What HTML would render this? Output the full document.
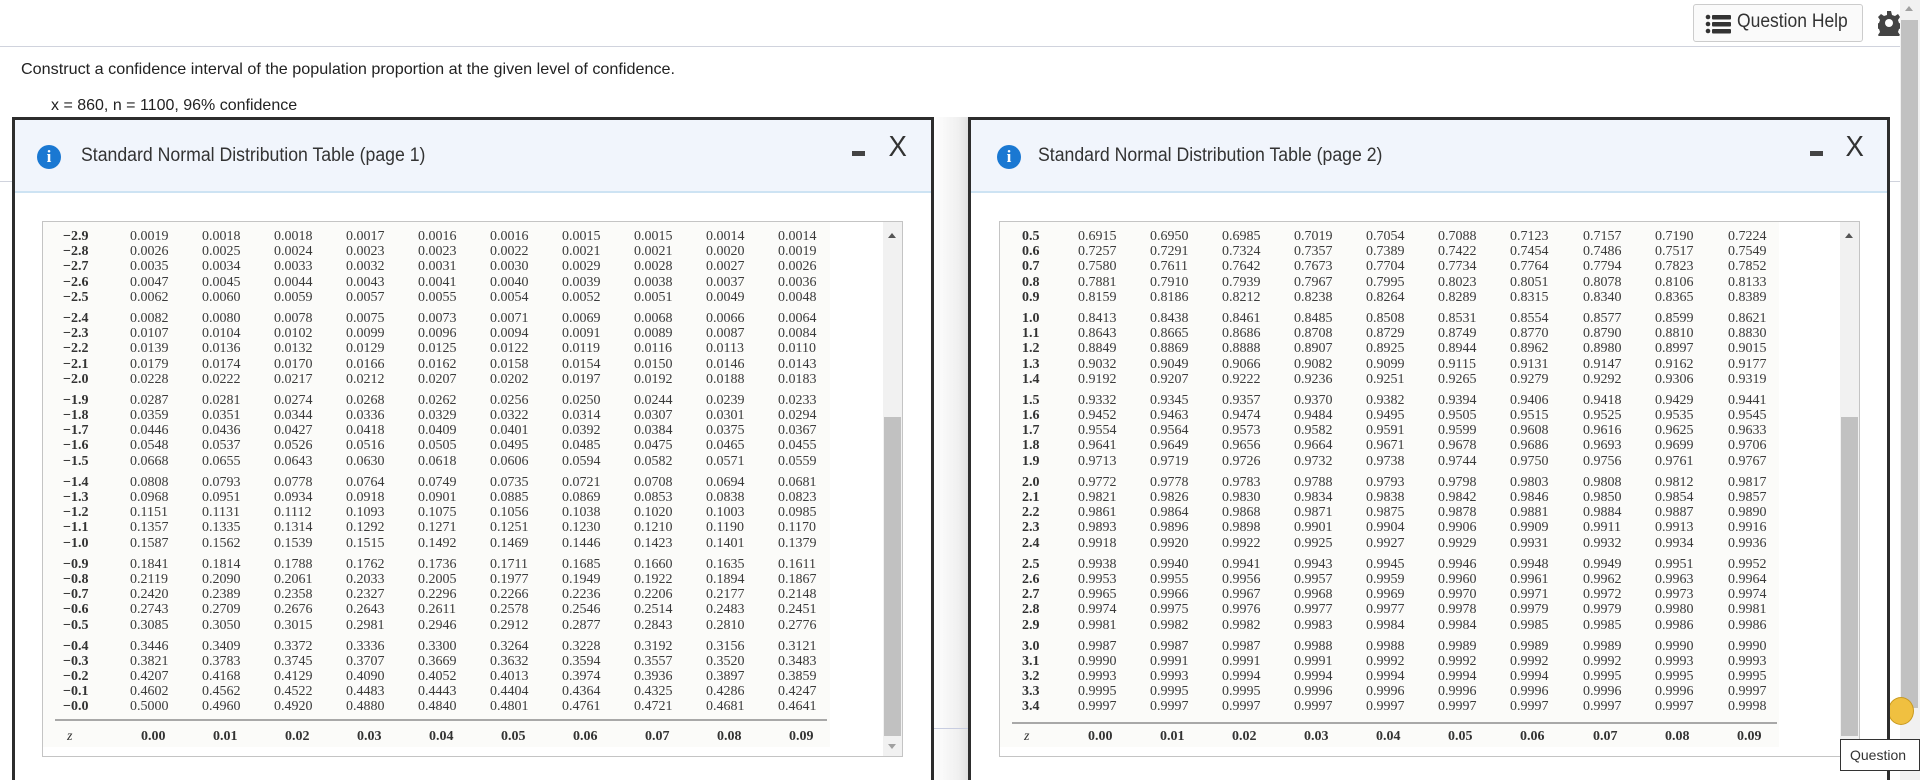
<!DOCTYPE html>
<html><head><meta charset="utf-8"><style>
*{margin:0;padding:0;box-sizing:border-box}
html,body{width:1920px;height:780px;overflow:hidden}
body{background:#fff;font-family:"Liberation Sans",sans-serif;color:#333;position:relative}
.abs{position:absolute}
.dlg{position:absolute;top:117px;width:922px;height:670px;border:3px solid #2d2d2d;border-bottom:none;background:#fff;overflow:hidden}
.hdr{position:absolute;left:0;top:0;right:0;height:73px;background:#f1f5fc;border-bottom:2px solid #cde3f3}
.ic{position:absolute;top:25px;width:24px;height:24px;border-radius:50%;background:#1a78d2;color:#fff;font:bold 17px "Liberation Serif",serif;text-align:center;line-height:24px}
.tt{position:absolute;top:25px;font-size:19px;color:#333;transform:scaleX(.93);transform-origin:left}
.dash{position:absolute;top:31px;width:13px;height:5px;background:#444}
.x{position:absolute;top:11px;font-size:29px;color:#333;font-weight:normal;transform:scaleX(.95)}
.box{position:absolute;top:101px;width:861px;height:536px;border:1px solid #c4c4c4;background:#fff}
.cont{position:absolute;left:0;top:0;height:525px;background:#fbfbf9;font:14px "Liberation Serif",serif;color:#3a3a3a;padding-top:7px}
.r{height:15.2px;line-height:15.2px;position:relative;white-space:nowrap}
.g{margin-top:6px}
.r b,.r i{position:absolute;top:0}
.r b{font-weight:bold;color:#333}
.r i{font-style:normal}
.sb{position:absolute;right:0;top:0;width:19px;height:534px;background:#f1f1f1}
.th{position:absolute;left:1px;width:17px;background:#c1c1c1}
.rule{position:absolute;height:2px;background:#a8a8a8}
.lab{position:absolute;font:bold 14px "Liberation Serif",serif;color:#333}
</style></head><body>

<div class="abs" style="left:0;top:46px;width:1900px;height:1px;background:#d0d3dd"></div>
<div class="abs" style="left:0;top:181px;width:1900px;height:1px;background:#d0d3dd"></div>
<div class="abs" style="left:21px;top:61px;font-size:16px;color:#222;white-space:nowrap;transform:scaleX(1.01);transform-origin:left">Construct a confidence interval of the population proportion at the given level of confidence.</div>
<div class="abs" style="left:51px;top:97px;font-size:16px;color:#222;white-space:nowrap">x = 860, n = 1100, 96% confidence</div>

<div class="abs" style="left:1693px;top:4px;width:170px;height:38px;border:1px solid #ccc;border-radius:3px;background:#fafafa"></div>
<svg class="abs" style="left:1705px;top:14px" width="27" height="20" viewBox="0 0 27 20"><g fill="#333"><circle cx="3" cy="3" r="2.3"/><circle cx="3" cy="10" r="2.3"/><circle cx="3" cy="17" r="2.3"/><rect x="7" y="1" width="19" height="4.5" rx="1"/><rect x="7" y="8" width="19" height="4.5" rx="1"/><rect x="7" y="15" width="19" height="4.5" rx="1"/></g></svg>
<div class="abs" style="left:1737px;top:11px;font-size:19px;color:#333;transform:scaleX(.92);transform-origin:left;white-space:nowrap">Question Help</div>
<svg class="abs" style="left:1878px;top:10px" width="22" height="26" viewBox="0 0 22 26"><path fill="#444" d="M9 1h4l1 4 3 1 3-2 2 3-2 3 1 3 3 1v4l-3 1-1 3 2 3-3 3-3-2-3 1-1 4H9l-1-4-3-1-3 2-2-3 2-3-1-3-3-1v-4l3-1 1-3-2-3 3-3 3 2 3-1z"/><circle cx="11" cy="13" r="4" fill="#fff"/></svg>
<div class="abs" style="left:1900px;top:0;width:20px;height:780px;background:#f1f1f1"></div>
<div class="abs" style="left:1901px;top:20px;width:17px;height:688px;background:#c1c1c1"></div>
<div class="abs" style="left:1905px;top:6px;width:0;height:0;border-left:4px solid transparent;border-right:4px solid transparent;border-bottom:5px solid #a0a0a0"></div>
<div class="abs" style="left:1888px;top:697px;width:26px;height:28px;border-radius:50%;background:#f0c040;border:1px solid #c99a20"></div>

<div class="abs" style="left:933px;top:117px;width:36px;height:663px;background:linear-gradient(90deg,#fff,#f0f0f0 70%,#dedede)"></div>
<div class="abs" style="left:933px;top:728px;width:36px;height:1px;background:#c8cde0"></div>

<!-- Dialog 1 -->
<div class="dlg" style="left:12px">
 <div class="hdr">
  <div class="ic" style="left:22px">i</div>
  <div class="tt" style="left:66px">Standard Normal Distribution Table (page 1)</div>
  <div class="dash" style="left:837px"></div>
  <div class="x" style="left:873px">X</div>
 </div>
 <div class="box" style="left:27px">
  <div class="cont" style="width:787px">
<div class="r"><b style="left:20px">−2.9</b><i style="left:87px">0.0019</i><i style="left:159px">0.0018</i><i style="left:231px">0.0018</i><i style="left:303px">0.0017</i><i style="left:375px">0.0016</i><i style="left:447px">0.0016</i><i style="left:519px">0.0015</i><i style="left:591px">0.0015</i><i style="left:663px">0.0014</i><i style="left:735px">0.0014</i></div>
<div class="r"><b style="left:20px">−2.8</b><i style="left:87px">0.0026</i><i style="left:159px">0.0025</i><i style="left:231px">0.0024</i><i style="left:303px">0.0023</i><i style="left:375px">0.0023</i><i style="left:447px">0.0022</i><i style="left:519px">0.0021</i><i style="left:591px">0.0021</i><i style="left:663px">0.0020</i><i style="left:735px">0.0019</i></div>
<div class="r"><b style="left:20px">−2.7</b><i style="left:87px">0.0035</i><i style="left:159px">0.0034</i><i style="left:231px">0.0033</i><i style="left:303px">0.0032</i><i style="left:375px">0.0031</i><i style="left:447px">0.0030</i><i style="left:519px">0.0029</i><i style="left:591px">0.0028</i><i style="left:663px">0.0027</i><i style="left:735px">0.0026</i></div>
<div class="r"><b style="left:20px">−2.6</b><i style="left:87px">0.0047</i><i style="left:159px">0.0045</i><i style="left:231px">0.0044</i><i style="left:303px">0.0043</i><i style="left:375px">0.0041</i><i style="left:447px">0.0040</i><i style="left:519px">0.0039</i><i style="left:591px">0.0038</i><i style="left:663px">0.0037</i><i style="left:735px">0.0036</i></div>
<div class="r"><b style="left:20px">−2.5</b><i style="left:87px">0.0062</i><i style="left:159px">0.0060</i><i style="left:231px">0.0059</i><i style="left:303px">0.0057</i><i style="left:375px">0.0055</i><i style="left:447px">0.0054</i><i style="left:519px">0.0052</i><i style="left:591px">0.0051</i><i style="left:663px">0.0049</i><i style="left:735px">0.0048</i></div>
<div class="r g"><b style="left:20px">−2.4</b><i style="left:87px">0.0082</i><i style="left:159px">0.0080</i><i style="left:231px">0.0078</i><i style="left:303px">0.0075</i><i style="left:375px">0.0073</i><i style="left:447px">0.0071</i><i style="left:519px">0.0069</i><i style="left:591px">0.0068</i><i style="left:663px">0.0066</i><i style="left:735px">0.0064</i></div>
<div class="r"><b style="left:20px">−2.3</b><i style="left:87px">0.0107</i><i style="left:159px">0.0104</i><i style="left:231px">0.0102</i><i style="left:303px">0.0099</i><i style="left:375px">0.0096</i><i style="left:447px">0.0094</i><i style="left:519px">0.0091</i><i style="left:591px">0.0089</i><i style="left:663px">0.0087</i><i style="left:735px">0.0084</i></div>
<div class="r"><b style="left:20px">−2.2</b><i style="left:87px">0.0139</i><i style="left:159px">0.0136</i><i style="left:231px">0.0132</i><i style="left:303px">0.0129</i><i style="left:375px">0.0125</i><i style="left:447px">0.0122</i><i style="left:519px">0.0119</i><i style="left:591px">0.0116</i><i style="left:663px">0.0113</i><i style="left:735px">0.0110</i></div>
<div class="r"><b style="left:20px">−2.1</b><i style="left:87px">0.0179</i><i style="left:159px">0.0174</i><i style="left:231px">0.0170</i><i style="left:303px">0.0166</i><i style="left:375px">0.0162</i><i style="left:447px">0.0158</i><i style="left:519px">0.0154</i><i style="left:591px">0.0150</i><i style="left:663px">0.0146</i><i style="left:735px">0.0143</i></div>
<div class="r"><b style="left:20px">−2.0</b><i style="left:87px">0.0228</i><i style="left:159px">0.0222</i><i style="left:231px">0.0217</i><i style="left:303px">0.0212</i><i style="left:375px">0.0207</i><i style="left:447px">0.0202</i><i style="left:519px">0.0197</i><i style="left:591px">0.0192</i><i style="left:663px">0.0188</i><i style="left:735px">0.0183</i></div>
<div class="r g"><b style="left:20px">−1.9</b><i style="left:87px">0.0287</i><i style="left:159px">0.0281</i><i style="left:231px">0.0274</i><i style="left:303px">0.0268</i><i style="left:375px">0.0262</i><i style="left:447px">0.0256</i><i style="left:519px">0.0250</i><i style="left:591px">0.0244</i><i style="left:663px">0.0239</i><i style="left:735px">0.0233</i></div>
<div class="r"><b style="left:20px">−1.8</b><i style="left:87px">0.0359</i><i style="left:159px">0.0351</i><i style="left:231px">0.0344</i><i style="left:303px">0.0336</i><i style="left:375px">0.0329</i><i style="left:447px">0.0322</i><i style="left:519px">0.0314</i><i style="left:591px">0.0307</i><i style="left:663px">0.0301</i><i style="left:735px">0.0294</i></div>
<div class="r"><b style="left:20px">−1.7</b><i style="left:87px">0.0446</i><i style="left:159px">0.0436</i><i style="left:231px">0.0427</i><i style="left:303px">0.0418</i><i style="left:375px">0.0409</i><i style="left:447px">0.0401</i><i style="left:519px">0.0392</i><i style="left:591px">0.0384</i><i style="left:663px">0.0375</i><i style="left:735px">0.0367</i></div>
<div class="r"><b style="left:20px">−1.6</b><i style="left:87px">0.0548</i><i style="left:159px">0.0537</i><i style="left:231px">0.0526</i><i style="left:303px">0.0516</i><i style="left:375px">0.0505</i><i style="left:447px">0.0495</i><i style="left:519px">0.0485</i><i style="left:591px">0.0475</i><i style="left:663px">0.0465</i><i style="left:735px">0.0455</i></div>
<div class="r"><b style="left:20px">−1.5</b><i style="left:87px">0.0668</i><i style="left:159px">0.0655</i><i style="left:231px">0.0643</i><i style="left:303px">0.0630</i><i style="left:375px">0.0618</i><i style="left:447px">0.0606</i><i style="left:519px">0.0594</i><i style="left:591px">0.0582</i><i style="left:663px">0.0571</i><i style="left:735px">0.0559</i></div>
<div class="r g"><b style="left:20px">−1.4</b><i style="left:87px">0.0808</i><i style="left:159px">0.0793</i><i style="left:231px">0.0778</i><i style="left:303px">0.0764</i><i style="left:375px">0.0749</i><i style="left:447px">0.0735</i><i style="left:519px">0.0721</i><i style="left:591px">0.0708</i><i style="left:663px">0.0694</i><i style="left:735px">0.0681</i></div>
<div class="r"><b style="left:20px">−1.3</b><i style="left:87px">0.0968</i><i style="left:159px">0.0951</i><i style="left:231px">0.0934</i><i style="left:303px">0.0918</i><i style="left:375px">0.0901</i><i style="left:447px">0.0885</i><i style="left:519px">0.0869</i><i style="left:591px">0.0853</i><i style="left:663px">0.0838</i><i style="left:735px">0.0823</i></div>
<div class="r"><b style="left:20px">−1.2</b><i style="left:87px">0.1151</i><i style="left:159px">0.1131</i><i style="left:231px">0.1112</i><i style="left:303px">0.1093</i><i style="left:375px">0.1075</i><i style="left:447px">0.1056</i><i style="left:519px">0.1038</i><i style="left:591px">0.1020</i><i style="left:663px">0.1003</i><i style="left:735px">0.0985</i></div>
<div class="r"><b style="left:20px">−1.1</b><i style="left:87px">0.1357</i><i style="left:159px">0.1335</i><i style="left:231px">0.1314</i><i style="left:303px">0.1292</i><i style="left:375px">0.1271</i><i style="left:447px">0.1251</i><i style="left:519px">0.1230</i><i style="left:591px">0.1210</i><i style="left:663px">0.1190</i><i style="left:735px">0.1170</i></div>
<div class="r"><b style="left:20px">−1.0</b><i style="left:87px">0.1587</i><i style="left:159px">0.1562</i><i style="left:231px">0.1539</i><i style="left:303px">0.1515</i><i style="left:375px">0.1492</i><i style="left:447px">0.1469</i><i style="left:519px">0.1446</i><i style="left:591px">0.1423</i><i style="left:663px">0.1401</i><i style="left:735px">0.1379</i></div>
<div class="r g"><b style="left:20px">−0.9</b><i style="left:87px">0.1841</i><i style="left:159px">0.1814</i><i style="left:231px">0.1788</i><i style="left:303px">0.1762</i><i style="left:375px">0.1736</i><i style="left:447px">0.1711</i><i style="left:519px">0.1685</i><i style="left:591px">0.1660</i><i style="left:663px">0.1635</i><i style="left:735px">0.1611</i></div>
<div class="r"><b style="left:20px">−0.8</b><i style="left:87px">0.2119</i><i style="left:159px">0.2090</i><i style="left:231px">0.2061</i><i style="left:303px">0.2033</i><i style="left:375px">0.2005</i><i style="left:447px">0.1977</i><i style="left:519px">0.1949</i><i style="left:591px">0.1922</i><i style="left:663px">0.1894</i><i style="left:735px">0.1867</i></div>
<div class="r"><b style="left:20px">−0.7</b><i style="left:87px">0.2420</i><i style="left:159px">0.2389</i><i style="left:231px">0.2358</i><i style="left:303px">0.2327</i><i style="left:375px">0.2296</i><i style="left:447px">0.2266</i><i style="left:519px">0.2236</i><i style="left:591px">0.2206</i><i style="left:663px">0.2177</i><i style="left:735px">0.2148</i></div>
<div class="r"><b style="left:20px">−0.6</b><i style="left:87px">0.2743</i><i style="left:159px">0.2709</i><i style="left:231px">0.2676</i><i style="left:303px">0.2643</i><i style="left:375px">0.2611</i><i style="left:447px">0.2578</i><i style="left:519px">0.2546</i><i style="left:591px">0.2514</i><i style="left:663px">0.2483</i><i style="left:735px">0.2451</i></div>
<div class="r"><b style="left:20px">−0.5</b><i style="left:87px">0.3085</i><i style="left:159px">0.3050</i><i style="left:231px">0.3015</i><i style="left:303px">0.2981</i><i style="left:375px">0.2946</i><i style="left:447px">0.2912</i><i style="left:519px">0.2877</i><i style="left:591px">0.2843</i><i style="left:663px">0.2810</i><i style="left:735px">0.2776</i></div>
<div class="r g"><b style="left:20px">−0.4</b><i style="left:87px">0.3446</i><i style="left:159px">0.3409</i><i style="left:231px">0.3372</i><i style="left:303px">0.3336</i><i style="left:375px">0.3300</i><i style="left:447px">0.3264</i><i style="left:519px">0.3228</i><i style="left:591px">0.3192</i><i style="left:663px">0.3156</i><i style="left:735px">0.3121</i></div>
<div class="r"><b style="left:20px">−0.3</b><i style="left:87px">0.3821</i><i style="left:159px">0.3783</i><i style="left:231px">0.3745</i><i style="left:303px">0.3707</i><i style="left:375px">0.3669</i><i style="left:447px">0.3632</i><i style="left:519px">0.3594</i><i style="left:591px">0.3557</i><i style="left:663px">0.3520</i><i style="left:735px">0.3483</i></div>
<div class="r"><b style="left:20px">−0.2</b><i style="left:87px">0.4207</i><i style="left:159px">0.4168</i><i style="left:231px">0.4129</i><i style="left:303px">0.4090</i><i style="left:375px">0.4052</i><i style="left:447px">0.4013</i><i style="left:519px">0.3974</i><i style="left:591px">0.3936</i><i style="left:663px">0.3897</i><i style="left:735px">0.3859</i></div>
<div class="r"><b style="left:20px">−0.1</b><i style="left:87px">0.4602</i><i style="left:159px">0.4562</i><i style="left:231px">0.4522</i><i style="left:303px">0.4483</i><i style="left:375px">0.4443</i><i style="left:447px">0.4404</i><i style="left:519px">0.4364</i><i style="left:591px">0.4325</i><i style="left:663px">0.4286</i><i style="left:735px">0.4247</i></div>
<div class="r"><b style="left:20px">−0.0</b><i style="left:87px">0.5000</i><i style="left:159px">0.4960</i><i style="left:231px">0.4920</i><i style="left:303px">0.4880</i><i style="left:375px">0.4840</i><i style="left:447px">0.4801</i><i style="left:519px">0.4761</i><i style="left:591px">0.4721</i><i style="left:663px">0.4681</i><i style="left:735px">0.4641</i></div>
   <div class="rule" style="left:12px;top:497px;width:772px"></div>
   <div class="lab" style="left:24px;top:507px;font-style:italic;font-weight:normal">z</div>
   <div class="lab" style="left:98px;top:507px">0.00</div><div class="lab" style="left:170px;top:507px">0.01</div><div class="lab" style="left:242px;top:507px">0.02</div><div class="lab" style="left:314px;top:507px">0.03</div><div class="lab" style="left:386px;top:507px">0.04</div><div class="lab" style="left:458px;top:507px">0.05</div><div class="lab" style="left:530px;top:507px">0.06</div><div class="lab" style="left:602px;top:507px">0.07</div><div class="lab" style="left:674px;top:507px">0.08</div><div class="lab" style="left:746px;top:507px">0.09</div>
  </div>
  <div class="sb"><div class="th" style="top:195px;height:319px"></div>
   <div class="abs" style="left:5px;top:11px;border-left:4px solid transparent;border-right:4px solid transparent;border-bottom:5px solid #555"></div>
   <div class="abs" style="left:5px;top:522px;border-left:4px solid transparent;border-right:4px solid transparent;border-top:5px solid #a0a0a0"></div></div>
 </div>
</div>

<!-- Dialog 2 -->
<div class="dlg" style="left:968px">
 <div class="hdr">
  <div class="ic" style="left:26px">i</div>
  <div class="tt" style="left:67px">Standard Normal Distribution Table (page 2)</div>
  <div class="dash" style="left:839px"></div>
  <div class="x" style="left:874px">X</div>
 </div>
 <div class="box" style="left:28px">
  <div class="cont" style="width:779px">
<div class="r"><b style="left:22px">0.5</b><i style="left:78px">0.6915</i><i style="left:150px">0.6950</i><i style="left:222px">0.6985</i><i style="left:294px">0.7019</i><i style="left:366px">0.7054</i><i style="left:438px">0.7088</i><i style="left:510px">0.7123</i><i style="left:583px">0.7157</i><i style="left:655px">0.7190</i><i style="left:728px">0.7224</i></div>
<div class="r"><b style="left:22px">0.6</b><i style="left:78px">0.7257</i><i style="left:150px">0.7291</i><i style="left:222px">0.7324</i><i style="left:294px">0.7357</i><i style="left:366px">0.7389</i><i style="left:438px">0.7422</i><i style="left:510px">0.7454</i><i style="left:583px">0.7486</i><i style="left:655px">0.7517</i><i style="left:728px">0.7549</i></div>
<div class="r"><b style="left:22px">0.7</b><i style="left:78px">0.7580</i><i style="left:150px">0.7611</i><i style="left:222px">0.7642</i><i style="left:294px">0.7673</i><i style="left:366px">0.7704</i><i style="left:438px">0.7734</i><i style="left:510px">0.7764</i><i style="left:583px">0.7794</i><i style="left:655px">0.7823</i><i style="left:728px">0.7852</i></div>
<div class="r"><b style="left:22px">0.8</b><i style="left:78px">0.7881</i><i style="left:150px">0.7910</i><i style="left:222px">0.7939</i><i style="left:294px">0.7967</i><i style="left:366px">0.7995</i><i style="left:438px">0.8023</i><i style="left:510px">0.8051</i><i style="left:583px">0.8078</i><i style="left:655px">0.8106</i><i style="left:728px">0.8133</i></div>
<div class="r"><b style="left:22px">0.9</b><i style="left:78px">0.8159</i><i style="left:150px">0.8186</i><i style="left:222px">0.8212</i><i style="left:294px">0.8238</i><i style="left:366px">0.8264</i><i style="left:438px">0.8289</i><i style="left:510px">0.8315</i><i style="left:583px">0.8340</i><i style="left:655px">0.8365</i><i style="left:728px">0.8389</i></div>
<div class="r g"><b style="left:22px">1.0</b><i style="left:78px">0.8413</i><i style="left:150px">0.8438</i><i style="left:222px">0.8461</i><i style="left:294px">0.8485</i><i style="left:366px">0.8508</i><i style="left:438px">0.8531</i><i style="left:510px">0.8554</i><i style="left:583px">0.8577</i><i style="left:655px">0.8599</i><i style="left:728px">0.8621</i></div>
<div class="r"><b style="left:22px">1.1</b><i style="left:78px">0.8643</i><i style="left:150px">0.8665</i><i style="left:222px">0.8686</i><i style="left:294px">0.8708</i><i style="left:366px">0.8729</i><i style="left:438px">0.8749</i><i style="left:510px">0.8770</i><i style="left:583px">0.8790</i><i style="left:655px">0.8810</i><i style="left:728px">0.8830</i></div>
<div class="r"><b style="left:22px">1.2</b><i style="left:78px">0.8849</i><i style="left:150px">0.8869</i><i style="left:222px">0.8888</i><i style="left:294px">0.8907</i><i style="left:366px">0.8925</i><i style="left:438px">0.8944</i><i style="left:510px">0.8962</i><i style="left:583px">0.8980</i><i style="left:655px">0.8997</i><i style="left:728px">0.9015</i></div>
<div class="r"><b style="left:22px">1.3</b><i style="left:78px">0.9032</i><i style="left:150px">0.9049</i><i style="left:222px">0.9066</i><i style="left:294px">0.9082</i><i style="left:366px">0.9099</i><i style="left:438px">0.9115</i><i style="left:510px">0.9131</i><i style="left:583px">0.9147</i><i style="left:655px">0.9162</i><i style="left:728px">0.9177</i></div>
<div class="r"><b style="left:22px">1.4</b><i style="left:78px">0.9192</i><i style="left:150px">0.9207</i><i style="left:222px">0.9222</i><i style="left:294px">0.9236</i><i style="left:366px">0.9251</i><i style="left:438px">0.9265</i><i style="left:510px">0.9279</i><i style="left:583px">0.9292</i><i style="left:655px">0.9306</i><i style="left:728px">0.9319</i></div>
<div class="r g"><b style="left:22px">1.5</b><i style="left:78px">0.9332</i><i style="left:150px">0.9345</i><i style="left:222px">0.9357</i><i style="left:294px">0.9370</i><i style="left:366px">0.9382</i><i style="left:438px">0.9394</i><i style="left:510px">0.9406</i><i style="left:583px">0.9418</i><i style="left:655px">0.9429</i><i style="left:728px">0.9441</i></div>
<div class="r"><b style="left:22px">1.6</b><i style="left:78px">0.9452</i><i style="left:150px">0.9463</i><i style="left:222px">0.9474</i><i style="left:294px">0.9484</i><i style="left:366px">0.9495</i><i style="left:438px">0.9505</i><i style="left:510px">0.9515</i><i style="left:583px">0.9525</i><i style="left:655px">0.9535</i><i style="left:728px">0.9545</i></div>
<div class="r"><b style="left:22px">1.7</b><i style="left:78px">0.9554</i><i style="left:150px">0.9564</i><i style="left:222px">0.9573</i><i style="left:294px">0.9582</i><i style="left:366px">0.9591</i><i style="left:438px">0.9599</i><i style="left:510px">0.9608</i><i style="left:583px">0.9616</i><i style="left:655px">0.9625</i><i style="left:728px">0.9633</i></div>
<div class="r"><b style="left:22px">1.8</b><i style="left:78px">0.9641</i><i style="left:150px">0.9649</i><i style="left:222px">0.9656</i><i style="left:294px">0.9664</i><i style="left:366px">0.9671</i><i style="left:438px">0.9678</i><i style="left:510px">0.9686</i><i style="left:583px">0.9693</i><i style="left:655px">0.9699</i><i style="left:728px">0.9706</i></div>
<div class="r"><b style="left:22px">1.9</b><i style="left:78px">0.9713</i><i style="left:150px">0.9719</i><i style="left:222px">0.9726</i><i style="left:294px">0.9732</i><i style="left:366px">0.9738</i><i style="left:438px">0.9744</i><i style="left:510px">0.9750</i><i style="left:583px">0.9756</i><i style="left:655px">0.9761</i><i style="left:728px">0.9767</i></div>
<div class="r g"><b style="left:22px">2.0</b><i style="left:78px">0.9772</i><i style="left:150px">0.9778</i><i style="left:222px">0.9783</i><i style="left:294px">0.9788</i><i style="left:366px">0.9793</i><i style="left:438px">0.9798</i><i style="left:510px">0.9803</i><i style="left:583px">0.9808</i><i style="left:655px">0.9812</i><i style="left:728px">0.9817</i></div>
<div class="r"><b style="left:22px">2.1</b><i style="left:78px">0.9821</i><i style="left:150px">0.9826</i><i style="left:222px">0.9830</i><i style="left:294px">0.9834</i><i style="left:366px">0.9838</i><i style="left:438px">0.9842</i><i style="left:510px">0.9846</i><i style="left:583px">0.9850</i><i style="left:655px">0.9854</i><i style="left:728px">0.9857</i></div>
<div class="r"><b style="left:22px">2.2</b><i style="left:78px">0.9861</i><i style="left:150px">0.9864</i><i style="left:222px">0.9868</i><i style="left:294px">0.9871</i><i style="left:366px">0.9875</i><i style="left:438px">0.9878</i><i style="left:510px">0.9881</i><i style="left:583px">0.9884</i><i style="left:655px">0.9887</i><i style="left:728px">0.9890</i></div>
<div class="r"><b style="left:22px">2.3</b><i style="left:78px">0.9893</i><i style="left:150px">0.9896</i><i style="left:222px">0.9898</i><i style="left:294px">0.9901</i><i style="left:366px">0.9904</i><i style="left:438px">0.9906</i><i style="left:510px">0.9909</i><i style="left:583px">0.9911</i><i style="left:655px">0.9913</i><i style="left:728px">0.9916</i></div>
<div class="r"><b style="left:22px">2.4</b><i style="left:78px">0.9918</i><i style="left:150px">0.9920</i><i style="left:222px">0.9922</i><i style="left:294px">0.9925</i><i style="left:366px">0.9927</i><i style="left:438px">0.9929</i><i style="left:510px">0.9931</i><i style="left:583px">0.9932</i><i style="left:655px">0.9934</i><i style="left:728px">0.9936</i></div>
<div class="r g"><b style="left:22px">2.5</b><i style="left:78px">0.9938</i><i style="left:150px">0.9940</i><i style="left:222px">0.9941</i><i style="left:294px">0.9943</i><i style="left:366px">0.9945</i><i style="left:438px">0.9946</i><i style="left:510px">0.9948</i><i style="left:583px">0.9949</i><i style="left:655px">0.9951</i><i style="left:728px">0.9952</i></div>
<div class="r"><b style="left:22px">2.6</b><i style="left:78px">0.9953</i><i style="left:150px">0.9955</i><i style="left:222px">0.9956</i><i style="left:294px">0.9957</i><i style="left:366px">0.9959</i><i style="left:438px">0.9960</i><i style="left:510px">0.9961</i><i style="left:583px">0.9962</i><i style="left:655px">0.9963</i><i style="left:728px">0.9964</i></div>
<div class="r"><b style="left:22px">2.7</b><i style="left:78px">0.9965</i><i style="left:150px">0.9966</i><i style="left:222px">0.9967</i><i style="left:294px">0.9968</i><i style="left:366px">0.9969</i><i style="left:438px">0.9970</i><i style="left:510px">0.9971</i><i style="left:583px">0.9972</i><i style="left:655px">0.9973</i><i style="left:728px">0.9974</i></div>
<div class="r"><b style="left:22px">2.8</b><i style="left:78px">0.9974</i><i style="left:150px">0.9975</i><i style="left:222px">0.9976</i><i style="left:294px">0.9977</i><i style="left:366px">0.9977</i><i style="left:438px">0.9978</i><i style="left:510px">0.9979</i><i style="left:583px">0.9979</i><i style="left:655px">0.9980</i><i style="left:728px">0.9981</i></div>
<div class="r"><b style="left:22px">2.9</b><i style="left:78px">0.9981</i><i style="left:150px">0.9982</i><i style="left:222px">0.9982</i><i style="left:294px">0.9983</i><i style="left:366px">0.9984</i><i style="left:438px">0.9984</i><i style="left:510px">0.9985</i><i style="left:583px">0.9985</i><i style="left:655px">0.9986</i><i style="left:728px">0.9986</i></div>
<div class="r g"><b style="left:22px">3.0</b><i style="left:78px">0.9987</i><i style="left:150px">0.9987</i><i style="left:222px">0.9987</i><i style="left:294px">0.9988</i><i style="left:366px">0.9988</i><i style="left:438px">0.9989</i><i style="left:510px">0.9989</i><i style="left:583px">0.9989</i><i style="left:655px">0.9990</i><i style="left:728px">0.9990</i></div>
<div class="r"><b style="left:22px">3.1</b><i style="left:78px">0.9990</i><i style="left:150px">0.9991</i><i style="left:222px">0.9991</i><i style="left:294px">0.9991</i><i style="left:366px">0.9992</i><i style="left:438px">0.9992</i><i style="left:510px">0.9992</i><i style="left:583px">0.9992</i><i style="left:655px">0.9993</i><i style="left:728px">0.9993</i></div>
<div class="r"><b style="left:22px">3.2</b><i style="left:78px">0.9993</i><i style="left:150px">0.9993</i><i style="left:222px">0.9994</i><i style="left:294px">0.9994</i><i style="left:366px">0.9994</i><i style="left:438px">0.9994</i><i style="left:510px">0.9994</i><i style="left:583px">0.9995</i><i style="left:655px">0.9995</i><i style="left:728px">0.9995</i></div>
<div class="r"><b style="left:22px">3.3</b><i style="left:78px">0.9995</i><i style="left:150px">0.9995</i><i style="left:222px">0.9995</i><i style="left:294px">0.9996</i><i style="left:366px">0.9996</i><i style="left:438px">0.9996</i><i style="left:510px">0.9996</i><i style="left:583px">0.9996</i><i style="left:655px">0.9996</i><i style="left:728px">0.9997</i></div>
<div class="r"><b style="left:22px">3.4</b><i style="left:78px">0.9997</i><i style="left:150px">0.9997</i><i style="left:222px">0.9997</i><i style="left:294px">0.9997</i><i style="left:366px">0.9997</i><i style="left:438px">0.9997</i><i style="left:510px">0.9997</i><i style="left:583px">0.9997</i><i style="left:655px">0.9997</i><i style="left:728px">0.9998</i></div>
   <div class="rule" style="left:12px;top:500px;width:765px"></div>
   <div class="lab" style="left:24px;top:507px;font-style:italic;font-weight:normal">z</div>
   <div class="lab" style="left:88px;top:507px">0.00</div><div class="lab" style="left:160px;top:507px">0.01</div><div class="lab" style="left:232px;top:507px">0.02</div><div class="lab" style="left:304px;top:507px">0.03</div><div class="lab" style="left:376px;top:507px">0.04</div><div class="lab" style="left:448px;top:507px">0.05</div><div class="lab" style="left:520px;top:507px">0.06</div><div class="lab" style="left:593px;top:507px">0.07</div><div class="lab" style="left:665px;top:507px">0.08</div><div class="lab" style="left:737px;top:507px">0.09</div>
  </div>
  <div class="sb"><div class="th" style="top:195px;height:319px"></div>
   <div class="abs" style="left:5px;top:11px;border-left:4px solid transparent;border-right:4px solid transparent;border-bottom:5px solid #555"></div>
   <div class="abs" style="left:5px;top:522px;border-left:4px solid transparent;border-right:4px solid transparent;border-top:5px solid #a0a0a0"></div></div>
 </div>
</div>

<div class="abs" style="left:1840px;top:739px;width:80px;height:32px;border:1px solid #333;background:#fff;font-size:14px;color:#333;line-height:30px;padding-left:9px">Question</div>
</body></html>
